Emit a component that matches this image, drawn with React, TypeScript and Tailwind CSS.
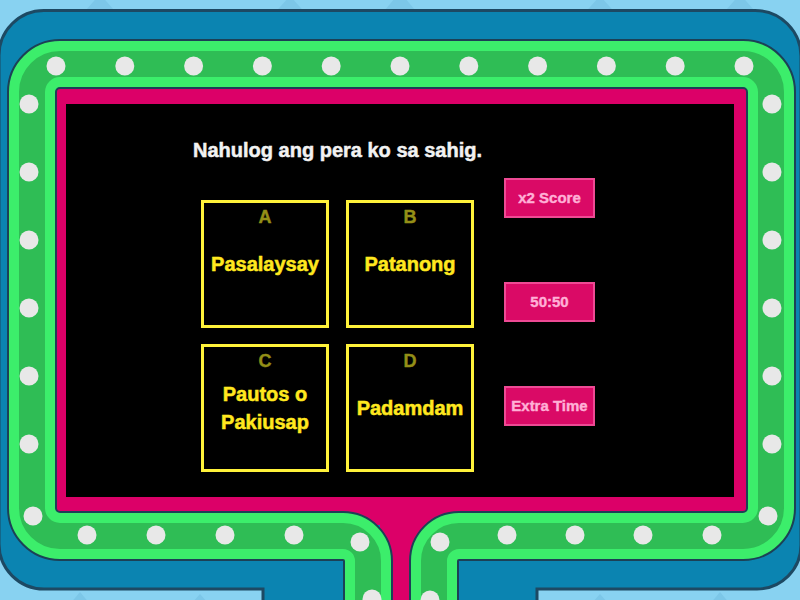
import React from "react";

const FONT = { fontFamily: "'Liberation Sans', Arial, sans-serif" };

const bluePath =
  "M 45 10.5 H 755 A 46 46 0 0 1 801 56 V 545 A 44 44 0 0 1 757 589 H 537 V 612 H 263 V 589 H 44 A 45 45 0 0 1 -1 544 V 56 A 45 45 0 0 1 45 10.5 Z";

const track =
  "M 368 612 V 561 A 25 25 0 0 0 343 536 H 60 A 28 28 0 0 1 32 508 V 92 A 28 28 0 0 1 60 64 H 743 A 28 28 0 0 1 771 92 V 508 A 28 28 0 0 1 743 536 H 459 A 25 25 0 0 0 434 561 V 612";

const dots: [number, number][] = [];
for (let k = 0; k <= 10; k++) dots.push([56 + 68.8 * k, 66]);
for (let k = 0; k <= 5; k++) dots.push([29, 104 + 68 * k]);
for (let k = 0; k <= 5; k++) dots.push([772, 104 + 68 * k]);
dots.push([33, 516], [768, 516]);
[87, 156, 225, 294].forEach((x) => dots.push([x, 535]));
dots.push([360, 542], [372, 599]);
[507, 575, 643, 712].forEach((x) => dots.push([x, 535]));
dots.push([440, 542], [430, 600]);

const skyTris = [
  "60,40 100,-6 140,40",
  "250,40 290,-4 330,40",
  "360,40 400,-8 440,40",
  "560,40 600,-4 640,40",
  "700,40 740,-6 780,40",
  "40,640 80,592 120,640",
  "160,640 200,594 240,640",
  "560,640 600,594 640,640",
  "680,640 720,592 760,640",
];

function Backdrop() {
  return (
    <svg className="absolute inset-0" width="800" height="600" viewBox="0 0 800 600">
      {skyTris.map((p, i) => (
        <polygon key={i} points={p} fill="#7cc7e8" />
      ))}
      <path d={bluePath} fill="#0b84b1" stroke="#1d4963" strokeWidth="3" />
      <rect x="40" y="80" width="720" height="445" fill="#dc0068" />
      <rect x="380" y="500" width="45" height="112" fill="#dc0068" />
      <path d={track} fill="none" stroke="#1c4156" strokeWidth="50" />
      <path d={track} fill="none" stroke="#3cee6b" strokeWidth="46" />
      <path d={track} fill="none" stroke="#2fbd55" strokeWidth="26" />
      {dots.map(([x, y], i) => (
        <circle key={i} cx={x} cy={y} r="9.5" fill="#e8e8e8" />
      ))}
    </svg>
  );
}

const answers = [
  { letter: "A", text: ["Pasalaysay"] },
  { letter: "B", text: ["Patanong"] },
  { letter: "C", text: ["Pautos o", "Pakiusap"] },
  { letter: "D", text: ["Padamdam"] },
];

const powerups = ["x2 Score", "50:50", "Extra Time"];

export default function App() {
  return (
    <div className="relative w-[800px] h-[600px] overflow-hidden bg-[#88d2f1]" style={FONT}>
      <Backdrop />
      <div className="relative pt-[104px] pl-[66px]">
        <div className="w-[668px] h-[393px] bg-black flex pl-[135px]">
          <div className="w-[273px] flex flex-col items-center pt-[34px]">
            <div className="whitespace-nowrap text-[20px] leading-[24px] font-bold text-[#f2f2f2] [-webkit-text-stroke:0.5px_currentColor]">
              Nahulog ang pera ko sa sahig.
            </div>
            <div className="mt-[38px] grid grid-cols-[128px_128px] gap-x-[17px] gap-y-[16px]">
              {answers.map((a) => (
                <div
                  key={a.letter}
                  className="w-[128px] h-[128px] border-[3px] border-[#fff23a] grid"
                >
                  <div className="[grid-area:1/1] self-start justify-self-center pt-[4px] text-[18px] leading-[20px] font-bold text-[#948f17] [-webkit-text-stroke:0.4px_currentColor]">
                    {a.letter}
                  </div>
                  <div className="[grid-area:1/1] self-center justify-self-center text-center text-[20px] leading-[28px] font-bold text-[#ffe81f] [-webkit-text-stroke:0.5px_currentColor]">
                    {a.text.map((t) => (
                      <div key={t}>{t}</div>
                    ))}
                  </div>
                </div>
              ))}
            </div>
          </div>
          <div className="ml-[30px] w-[91px] flex flex-col gap-[64px] pt-[74px]">
            {powerups.map((p) => (
              <div
                key={p}
                className="h-[40px] flex items-center justify-center bg-[#da0a66] border-2 border-[#ee4a94] text-[15px] font-bold text-[#ffb0d6] whitespace-nowrap [-webkit-text-stroke:0.4px_currentColor]"
              >
                {p}
              </div>
            ))}
          </div>
        </div>
      </div>
    </div>
  );
}
